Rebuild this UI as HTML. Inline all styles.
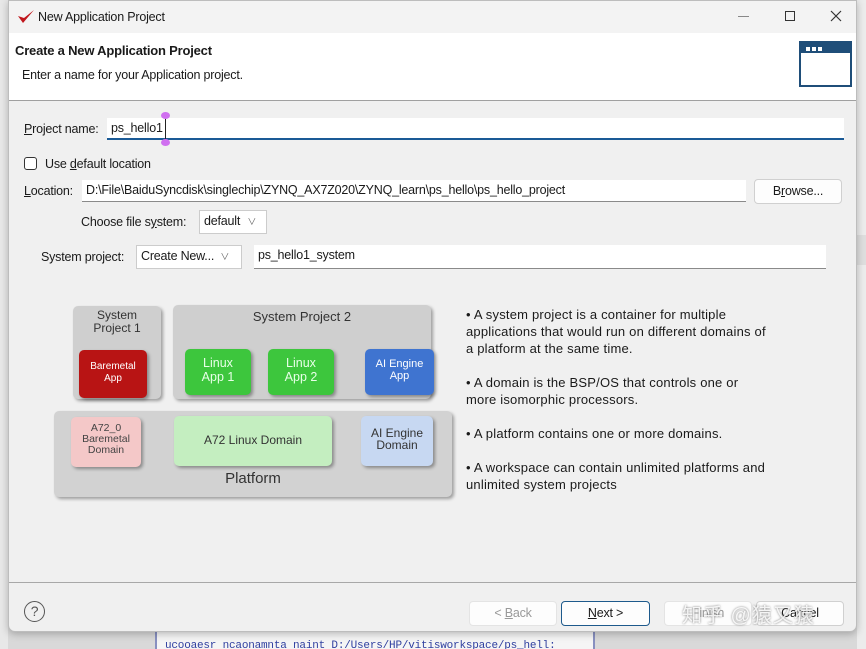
<!DOCTYPE html>
<html><head><meta charset="utf-8">
<style>
*{box-sizing:border-box;margin:0;padding:0}
body{width:866px;height:649px;background:#d9d9d9;font-family:"Liberation Sans","Noto Sans CJK SC",sans-serif;font-size:12.5px;color:#1a1a1a;position:relative;overflow:hidden;letter-spacing:-0.2px}
.abs{position:absolute}
#dlg{left:8px;top:0;width:849px;height:632px;background:#f0f0f0;border:1px solid #bdbdbd;border-radius:0 0 7px 7px;box-shadow:0 2px 8px rgba(0,0,0,.25);overflow:hidden}
.title{left:0;top:0;width:849px;height:32px;background:#f3f3f3}
.hdr{left:0;top:32px;width:849px;height:68px;background:#fff;border-bottom:1px solid #a0a0a0}
.inp{background:#fff;border-bottom:1px solid #8a8a8a;height:22px;padding:3px 4px}
.btn{background:#fdfdfd;border:1px solid #d0d0d0;border-radius:4px;text-align:center;line-height:22px}
.bx{position:absolute;border-radius:5px;text-align:center;font-family:"Liberation Sans",sans-serif;letter-spacing:0;box-shadow:2px 2px 3px rgba(0,0,0,.35)}
</style></head><body>
<div class="abs" style="left:0;top:0;width:8px;height:649px;background:#e8e8e8"></div>
<div class="abs" style="left:857px;top:0;width:9px;height:649px;background:#ececec"></div>
<div class="abs" style="left:857px;top:235px;width:9px;height:30px;background:#dedede"></div>
<div class="abs" style="left:155px;top:632px;width:440px;height:17px;background:#f5f5f5;border-left:2px solid #8890c0;border-right:2px solid #8890c0;font:11px 'Liberation Mono',monospace;color:#3040a0;padding-left:8px;line-height:28px;overflow:hidden">ucooaesr ncaonamnta naint D:/Users/HP/vitisworkspace/ps_hell:</div>
<div id="dlg" class="abs">
 <div class="abs title">
  <svg class="abs" style="left:8px;top:8px" width="18" height="16" viewBox="0 0 18 16"><path d="M1 7 L6 14 L17 1 L7 9 Z" fill="#c0161c"/></svg>
  <div class="abs" style="left:29px;top:9px;font-size:12.5px">New Application Project</div>
  <div class="abs" style="left:729px;top:15px;width:11px;height:1px;background:#888"></div>
  <div class="abs" style="left:776px;top:10px;width:10px;height:10px;border:1px solid #333"></div>
  <svg class="abs" style="left:821px;top:9px" width="12" height="12"><path d="M1 1L11 11M11 1L1 11" stroke="#333" stroke-width="1.2"/></svg>
 </div>
 <div class="abs hdr">
  <div class="abs" style="left:6px;top:10px;font-weight:bold;font-size:13px">Create a New Application Project</div>
  <div class="abs" style="left:13px;top:35px">Enter a name for your Application project.</div>
  <div class="abs" style="left:790px;top:8px;width:53px;height:46px;border:2px solid #1f4e79;background:#fff">
   <div style="height:10px;background:#1f4e79;padding:2px 5px;line-height:4px"><span style="display:inline-block;width:4px;height:4px;background:#fff;margin-right:2px"></span><span style="display:inline-block;width:4px;height:4px;background:#fff;margin-right:2px"></span><span style="display:inline-block;width:4px;height:4px;background:#fff"></span></div>
  </div>
 </div>
 <div class="abs" style="left:15px;top:121px"><u>P</u>roject name:</div>
 <div class="abs inp" style="left:98px;top:117px;width:737px;border-bottom:2px solid #1a5a96">ps_hello1</div>
 <div class="abs" style="left:156px;top:115px;width:1px;height:24px;background:#222"></div>
 <div class="abs" style="left:152px;top:111px;width:9px;height:7px;border-radius:50%;background:#d070f0"></div>
 <div class="abs" style="left:152px;top:138px;width:9px;height:7px;border-radius:50%;background:#d070f0"></div>
 <div class="abs" style="left:15px;top:156px;width:13px;height:13px;border:1px solid #333;border-radius:3px;background:#fff"></div>
 <div class="abs" style="left:36px;top:156px">Use <u>d</u>efault location</div>
 <div class="abs" style="left:15px;top:183px"><u>L</u>ocation:</div>
 <div class="abs inp" style="left:73px;top:179px;width:664px">D:\File\BaiduSyncdisk\singlechip\ZYNQ_AX7Z020\ZYNQ_learn\ps_hello\ps_hello_project</div>
 <div class="abs btn" style="left:745px;top:178px;width:88px;height:25px">B<u>r</u>owse...</div>
 <div class="abs" style="left:72px;top:214px">Choose file s<u>y</u>stem:</div>
 <div class="abs inp" style="left:190px;top:209px;width:68px;height:24px;border:1px solid #ccc">default <span style="font-size:9px;color:#666;margin-left:4px">&#8744;</span></div>
 <div class="abs" style="left:32px;top:249px">System project:</div>
 <div class="abs inp" style="left:127px;top:244px;width:106px;height:24px;border:1px solid #ccc">Create New... <span style="font-size:9px;color:#666;margin-left:3px">&#8744;</span></div>
 <div class="abs inp" style="left:245px;top:244px;width:572px;height:24px">ps_hello1_system</div>
 <div class="abs" style="left:40px;top:294px;width:410px;height:214px">
  <div class="bx" style="left:24px;top:11px;width:88px;height:93px;background:#cfcfcf;color:#333;font-size:12px;line-height:13px;padding-top:3px">System<br>Project 1</div>
  <div class="bx" style="left:30px;top:55px;width:68px;height:48px;background:#b81414;color:#fff;font-size:10px;line-height:12px;padding-top:11px">Baremetal<br>App</div>
  <div class="bx" style="left:124px;top:10px;width:258px;height:94px;background:#cfcfcf;color:#333;font-size:13px;padding-top:4px">System Project 2</div>
  <div class="bx" style="left:136px;top:54px;width:66px;height:46px;background:#3dc63d;color:#e8ffe8;font-size:12.5px;line-height:14px;padding-top:7px">Linux<br>App 1</div>
  <div class="bx" style="left:219px;top:54px;width:66px;height:46px;background:#3dc63d;color:#e8ffe8;font-size:12.5px;line-height:14px;padding-top:7px">Linux<br>App 2</div>
  <div class="bx" style="left:316px;top:54px;width:69px;height:46px;background:#3f74d0;color:#fff;font-size:11px;line-height:12px;padding-top:9px">AI Engine<br>App</div>
  <div class="bx" style="left:5px;top:116px;width:398px;height:86px;background:#d2d2d2;color:#333;font-size:15px;padding-top:59px">Platform</div>
  <div class="bx" style="left:22px;top:122px;width:70px;height:50px;background:#f4c8c8;color:#444;font-size:10.5px;line-height:11px;padding-top:6px">A72_0<br>Baremetal<br>Domain</div>
  <div class="bx" style="left:125px;top:121px;width:158px;height:50px;background:#c4eec0;color:#333;font-size:12px;padding-top:17px">A72 Linux Domain</div>
  <div class="bx" style="left:312px;top:121px;width:72px;height:50px;background:#c7d8f2;color:#333;font-size:12px;line-height:12px;padding-top:11px">AI Engine<br>Domain</div>
 </div>
 <div class="abs" style="left:457px;top:305px;width:300px;line-height:17px;font-size:13px;letter-spacing:0.2px">
  <div>• A system project is a container for multiple applications that would run on different domains of a platform at the same time.</div>
  <div style="margin-top:17px">• A domain is the BSP/OS that controls one or more isomorphic processors.</div>
  <div style="margin-top:17px">• A platform contains one or more domains.</div>
  <div style="margin-top:17px">• A workspace can contain unlimited platforms and unlimited system projects</div>
 </div>
 <div class="abs" style="left:0;top:581px;width:849px;height:1px;background:#a8a8a8"></div>
 <div class="abs" style="left:15px;top:600px;width:21px;height:21px;border:1.5px solid #555;border-radius:50%;text-align:center;font-size:14px;line-height:19px;color:#555">?</div>
 <div class="abs btn" style="left:460px;top:600px;width:88px;height:25px;color:#999;border-color:#e4e4e4">&lt; <u>B</u>ack</div>
 <div class="abs btn" style="left:552px;top:600px;width:89px;height:25px;border-color:#1e5a8c"><u>N</u>ext &gt;</div>
 <div class="abs btn" style="left:655px;top:600px;width:88px;height:25px;color:#999;border-color:#e4e4e4">Finish</div>
 <div class="abs btn" style="left:747px;top:600px;width:88px;height:25px">Cancel</div>
 <div class="abs" style="left:673px;top:598px;font-size:20px;color:rgba(255,255,255,.85);text-shadow:0 0 2px #777;letter-spacing:1px">知乎 @猿又猿</div>
</div>
</body></html>
